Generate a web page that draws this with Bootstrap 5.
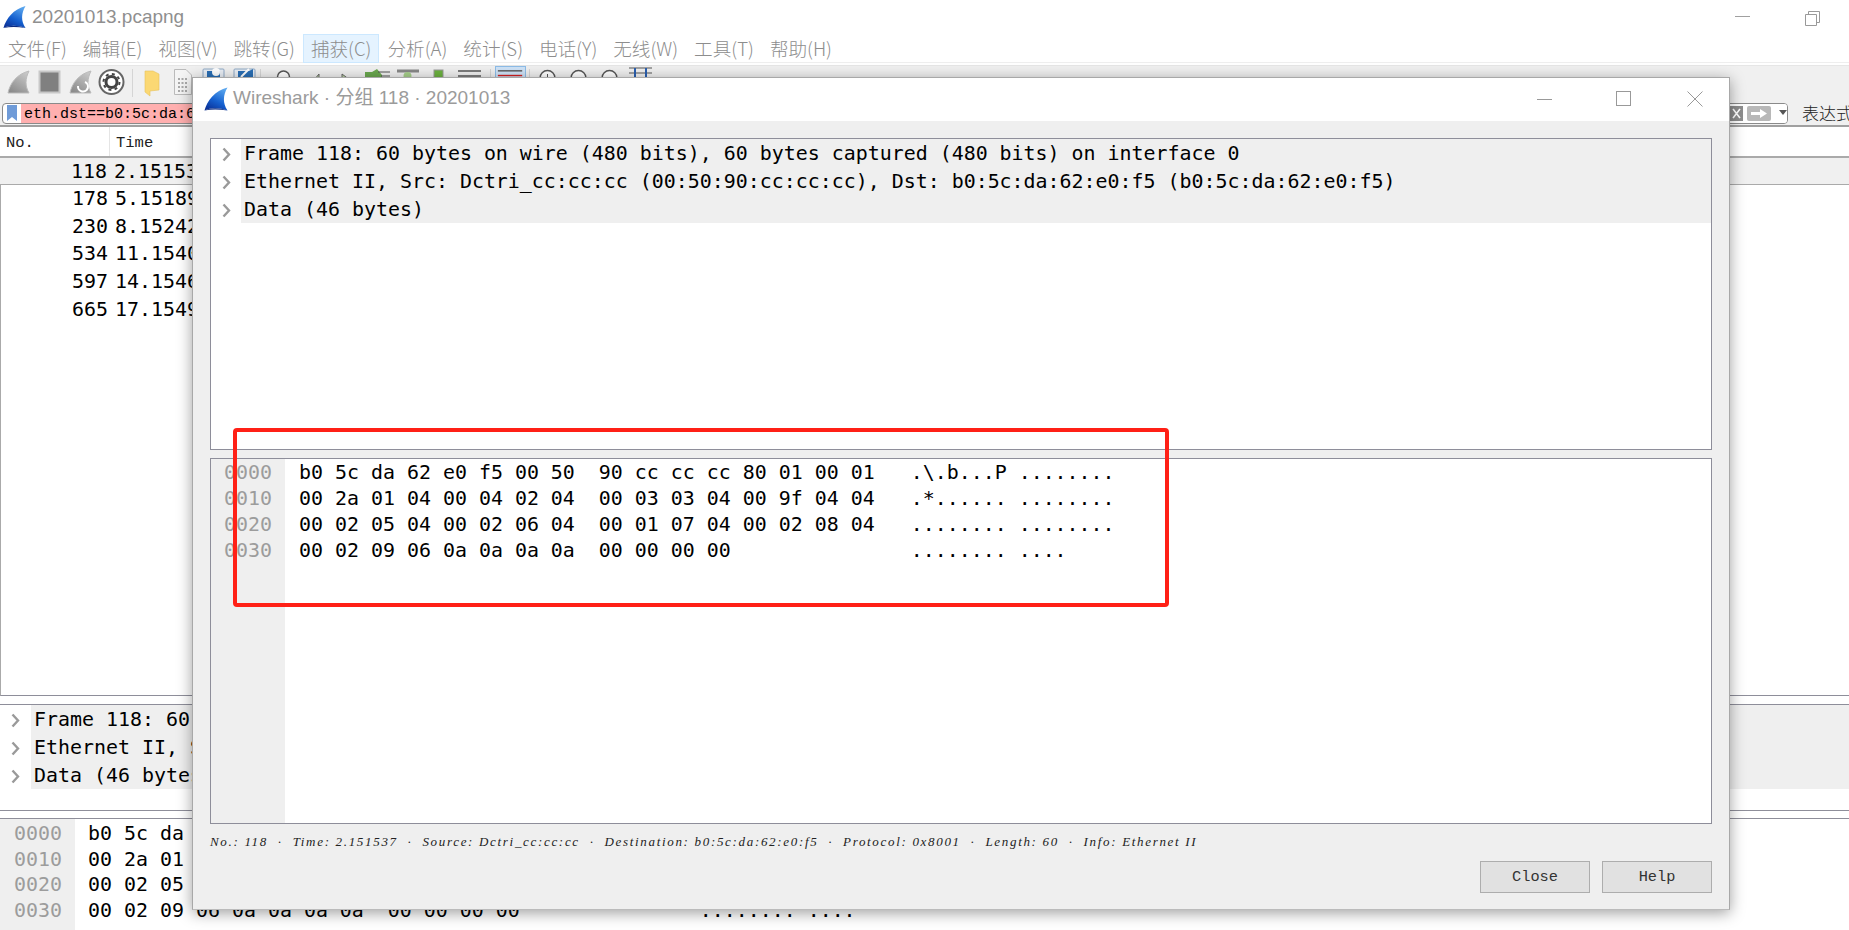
<!DOCTYPE html>
<html lang="zh">
<head>
<meta charset="utf-8">
<title>20201013.pcapng</title>
<link href="https://cdn.jsdelivr.net/npm/bootstrap@5.3.0/dist/css/bootstrap.min.css" rel="stylesheet">
<style>
html,body{margin:0;height:930px;overflow:hidden;background:#fff}
body{font-family:"Liberation Sans","Noto Sans CJK SC",sans-serif}
.desk{width:1849px;height:930px;overflow:hidden}
.mono{font-family:"DejaVu Sans Mono","Liberation Mono",monospace;font-size:19.93px;color:#000}
.win-title{height:34px;color:#8f8f8f;font-size:19px;padding-left:3px}
.win-title svg{margin-right:6px}
.cap-btn{position:absolute;top:10px}
.menu-strip{height:29px;padding-left:0}
.menu-it{height:29px;line-height:26px;padding:0 7px;font-size:18.6px;color:#8d8d8d;border:1px solid transparent;white-space:nowrap;font-family:"Noto Sans CJK SC",sans-serif;font-weight:300}
.menu-it.on{background:#e5f3ff;border-color:#cce8ff}
.tool-strip{height:36px;margin-top:2px;background:#f0f0f0;border-top:1px solid #e6e6e6;padding-left:3px}
.tool-it{width:31px;height:34px;flex:none}
.tool-it.on{background:#cfe3f7;border:1px solid #8dbde8}
.tool-sep{flex:none;border-left:1px solid #d5d5d5;height:28px;margin-top:3px}
.filter-strip{height:26px;background:#f0f0f0;border-bottom:2px solid #a0a0a0}
.filter-box{height:21px;margin-left:2px;width:1786px;flex:none;border:1px solid #8a8a8a;border-radius:4px;background:#fff;overflow:hidden}
.filter-mark{width:18px;flex:none}
.filter-txt{flex:1;background:#ffafaf;font-family:"Liberation Mono",monospace;font-size:15px;line-height:21px;padding-left:3px;color:#000}
.filter-end{width:58px;flex:none;background:#fff;padding-left:1px}
.expr{font-size:17px;font-family:"Noto Sans CJK SC",sans-serif;font-weight:300;margin-left:14px;color:#222;white-space:nowrap;flex:none}
.list-head{height:30px;border-bottom:1px solid #aaa;font-family:"Liberation Mono",monospace;font-size:15.5px;color:#222}
.head-no{width:110px;padding:2px 0 0 6px;border-right:1px solid #e5e5e5;line-height:29px}
.head-time{padding:2px 0 0 6px;line-height:29px}
.list-body{height:539px;border-bottom:1px solid #8e8e9a;border-left:1px solid #aaa}
.pkt{height:27.8px;line-height:27px}
.pkt.sel{background:#f0f0f0;border-top:1px solid #aaa;border-bottom:1px solid #aaa;margin-left:-1px}
.pkt-no{width:107px;text-align:right;flex:none}
.pkt-time{padding-left:7px}
.tree-pane{border-top:1px solid #8e8e9a;border-bottom:1px solid #8e8e9a;margin-top:8px;height:107px}
.tree-row{height:28px;line-height:29px}
.tree-arrow{width:31px;flex:none;text-align:center;background:#fff}
.tree-txt{flex:1;background:#efefef;padding-left:3px;white-space:pre}
.hex-pane{border-top:1px solid #8e8e9a;margin-top:7px;height:112px}
.gutter{width:75px;flex:none;background:#efefef;color:#9c9c9c;padding:2px 0 0 14px;line-height:25.6px;height:112px;white-space:pre}
.hex-lines{padding:2px 0 0 13px;line-height:25.6px;white-space:pre}
.dlg{left:192px;top:77px;width:1538px;height:833px;background:#efefef;border:1px solid #a8a8a8;border-bottom-color:#bbb;box-shadow:0 3px 14px rgba(0,0,0,.38)}
.dlg-title{height:43px;background:#fff;color:#9b9b9b;font-size:19px;padding:0 0 2px 11px;flex:none;font-family:"Liberation Sans","Noto Sans CJK SC",sans-serif}
.dlg-title svg{margin-right:5px}
.dlg-body{padding:17px 17px 16px 17px}
.dlg-tree{height:312px;background:#fff;border:1px solid #8e8e9a}
.dlg-tree .tree-arrow{width:30px}
.dlg-tree .tree-list{height:84px}
.dlg-hex{height:366px;margin-top:8px;background:#fff;border:1px solid #8e8e9a}
.dlg-hex .gutter{width:74px;height:100%;padding:1px 0 0 13px;line-height:26px}
.dlg-hex .hex-lines{padding:1px 0 0 14px;line-height:26px}
.dlg-status{height:37px;line-height:35px;font-family:"Liberation Serif",serif;font-style:italic;font-size:13px;color:#222;white-space:pre;letter-spacing:1.68px}
.dlg-btn{width:110px;height:32px;padding:0;background:#e1e1e1;border:1px solid #adadad;border-radius:0;font-family:"Liberation Mono",monospace;font-size:15.3px;color:#333;line-height:30px}
.red-frame{left:233px;top:428px;width:936px;height:179px;border:4.5px solid #ff2016;border-radius:4px}
</style>
</head>
<body>
<div class="desk position-relative">
  <svg width="0" height="0" class="position-absolute">
    <defs>
      <linearGradient id="fin" x1="0.7" y1="0" x2="0.2" y2="1"><stop offset="0" stop-color="#5aa6ee"/><stop offset=".55" stop-color="#1560cf"/><stop offset="1" stop-color="#0a2f95"/></linearGradient>
      <linearGradient id="grayfin" x1="0.8" y1="0" x2="0.2" y2="1"><stop offset="0" stop-color="#c9c9c9"/><stop offset="1" stop-color="#8a8a8a"/></linearGradient>
      <symbol id="shark" viewBox="0 0 24 24"><path d="M0.5 23.5C3 14 11 3.5 23.5 0.5C19 8 18.5 16 23.5 23.5C15 20.5 7 20.5 0.5 23.5Z" fill="url(#fin)"/><path d="M0.5 23.5C7 20.5 15 20.5 23.5 23.5C15 22 7 22 0.5 23.5Z" fill="#0a2a80"/></symbol>
    </defs>
  </svg>

  <!-- main window -->
  <div class="win-title d-flex align-items-center position-relative">
    <svg width="23" height="24"><use href="#shark"/></svg><span>20201013.pcapng</span>
    <svg class="cap-btn" style="left:1735px" width="16" height="14"><path d="M0 6.5H15" stroke="#a0a0a0" fill="none"/></svg>
    <svg class="cap-btn" style="left:1805px" width="16" height="16"><path d="M.5 4.5H11.5V15.5H.5ZM3.5 4V1.5H14.5V12.5H12" stroke="#999" fill="none"/></svg>
  </div>
  <div class="menu-strip d-flex border-bottom" style="border-color:#eee!important">
    <span class="menu-it">文件(F)</span><span class="menu-it">编辑(E)</span><span class="menu-it">视图(V)</span><span class="menu-it">跳转(G)</span><span class="menu-it on">捕获(C)</span><span class="menu-it">分析(A)</span><span class="menu-it">统计(S)</span><span class="menu-it">电话(Y)</span><span class="menu-it">无线(W)</span><span class="menu-it">工具(T)</span><span class="menu-it">帮助(H)</span>
  </div>
  <div class="tool-strip d-flex">
    <svg class="tool-it" viewBox="0 0 31 34"><path d="M5 27C7 17 14 8 26 5C22 13 22 20 26 27Z" fill="url(#grayfin)" stroke="#bbb"/></svg>
    <svg class="tool-it" viewBox="0 0 31 34"><rect x="5.5" y="5.5" width="20" height="21" fill="#808080" stroke="#c8c8c8" stroke-width="2"/></svg>
    <svg class="tool-it" viewBox="0 0 31 34"><path d="M5 27C7 17 14 8 26 5C22 13 22 20 26 27Z" fill="url(#grayfin)" stroke="#bbb"/><path d="M20 16A5 5 0 1 1 13 20" fill="none" stroke="#fff" stroke-width="2"/></svg>
    <svg class="tool-it" viewBox="0 0 31 34"><circle cx="15.5" cy="16" r="12" fill="#fff" stroke="#666" stroke-width="2"/><circle cx="15.5" cy="16" r="5.5" fill="none" stroke="#444" stroke-width="3"/><circle cx="15.5" cy="16" r="8" fill="none" stroke="#444" stroke-width="2" stroke-dasharray="3 3.3"/></svg>
    <div class="tool-sep" style="margin-left:5px;width:4px"></div>
    <svg class="tool-it" viewBox="0 0 31 34"><path d="M9 5H17L23 8V24L14 25V30L9 26Z" fill="#fbd873" stroke="#e8c35a" stroke-width=".6"/></svg>
    <svg class="tool-it" viewBox="0 0 31 34"><path d="M7.5 3.5H19L24.5 9V28.5H7.5Z" fill="#f5f5f5" stroke="#bbb"/><path d="M11 13H21M11 17H21M11 21H21M11 25H21" stroke="#aaa" stroke-width="2" stroke-dasharray="2 1.5"/></svg>
    <svg class="tool-it" viewBox="0 0 31 34"><rect x="5" y="3" width="21" height="24" rx="1" fill="#e9eef5" stroke="#8ea8c5"/><path d="M9 5H22V12H9Z" fill="#2a6fb5"/><circle cx="18" cy="6" r="4" fill="#fff"/></svg>
    <svg class="tool-it" viewBox="0 0 31 34"><rect x="5" y="3" width="21" height="24" rx="1" fill="#e9eef5" stroke="#8ea8c5"/><path d="M9 5H20L24 3V12H9Z" fill="#2a6fb5"/><path d="M12 11L20 3" stroke="#fff" stroke-width="2"/></svg>
    <div class="tool-sep" style="width:8px"></div>
    <svg class="tool-it" viewBox="0 0 31 34"><circle cx="15.5" cy="11" r="6" fill="#fff" stroke="#555" stroke-width="1.5"/></svg>
    <svg class="tool-it" viewBox="0 0 31 34"><path d="M5 14H15L20 8V14H27" fill="#bcd9a4" stroke="#666"/></svg>
    <svg class="tool-it" viewBox="0 0 31 34"><path d="M5 14H12V8L20 14H27" fill="#bcd9a4" stroke="#666"/></svg>
    <svg class="tool-it" viewBox="0 0 31 34"><path d="M4 6H11L16 3L21 9V18H4Z" fill="#6aa84f"/><path d="M17 6H29M20 10H29M20 14H29" stroke="#555"/></svg>
    <svg class="tool-it" viewBox="0 0 31 34"><path d="M5 5H27" stroke="#888" stroke-width="3"/><circle cx="15.5" cy="10" r="4" fill="#a6cf8a"/></svg>
    <svg class="tool-it" viewBox="0 0 31 34"><rect x="11" y="4" width="9" height="16" fill="#6cb33f" stroke="#999"/></svg>
    <svg class="tool-it" viewBox="0 0 31 34"><path d="M4 5H27M4 10H27" stroke="#555" stroke-width="1.5"/></svg>
    <div class="tool-sep" style="width:11px;margin-left:5px;margin-right:-6px"></div>
    <svg class="tool-it on" viewBox="0 0 31 34"><path d="M2 4H28" stroke="#555" stroke-width="1.5"/><path d="M2 9H28" stroke="#d42020" stroke-width="1.5"/></svg>
    <div class="tool-sep" style="width:6px;margin-left:3px;margin-right:-3px"></div>
    <svg class="tool-it" viewBox="0 0 31 34"><circle cx="15.5" cy="12" r="7.5" fill="#fff" stroke="#555" stroke-width="1.4"/><path d="M15.5 8V16" stroke="#555"/></svg>
    <svg class="tool-it" viewBox="0 0 31 34"><circle cx="15.5" cy="12" r="7.5" fill="#fff" stroke="#555" stroke-width="1.4"/></svg>
    <svg class="tool-it" viewBox="0 0 31 34"><circle cx="15.5" cy="12" r="7.5" fill="#fff" stroke="#555" stroke-width="1.4"/></svg>
    <svg class="tool-it" viewBox="0 0 31 34"><path d="M4 2H27M4 7H27" stroke="#555"/><path d="M10 2V12M21 2V12" stroke="#2a5fb0" stroke-width="2"/></svg>
  </div>
  <div class="filter-strip d-flex align-items-center">
    <div class="filter-box d-flex">
      <div class="filter-mark d-flex justify-content-center align-items-center"><svg width="10" height="16"><path d="M0 0H10V16L5 12L0 16Z" fill="#6f9bd8"/></svg></div>
      <div class="filter-txt">eth.dst==b0:5c:da:6</div>
      <div class="filter-end d-flex align-items-center gap-1">
        <svg width="13" height="15"><rect width="13" height="15" fill="#8d8d8d"/><path d="M3 3L10 12M10 3L3 12" stroke="#fff" stroke-width="1.6"/></svg>
        <svg width="24" height="15"><rect width="24" height="15" rx="2" fill="#b8b8b8"/><path d="M4 6H13V3L20 7.5L13 12V9H4Z" fill="#fff"/></svg>
        <svg class="ms-1" width="8" height="6"><path d="M0 0H8L4 5Z" fill="#555"/></svg>
      </div>
    </div>
    <span class="expr">表达式</span>
  </div>
  <div class="list-head d-flex"><div class="head-no">No.</div><div class="head-time">Time</div></div>
  <div class="list-body mono">
    <div class="pkt sel d-flex"><span class="pkt-no">118</span><span class="pkt-time">2.15153</span></div>
    <div class="pkt d-flex"><span class="pkt-no">178</span><span class="pkt-time">5.15189</span></div>
    <div class="pkt d-flex"><span class="pkt-no">230</span><span class="pkt-time">8.15242</span></div>
    <div class="pkt d-flex"><span class="pkt-no">534</span><span class="pkt-time">11.1540</span></div>
    <div class="pkt d-flex"><span class="pkt-no">597</span><span class="pkt-time">14.1546</span></div>
    <div class="pkt d-flex"><span class="pkt-no">665</span><span class="pkt-time">17.1549</span></div>
  </div>
  <div class="tree-pane mono">
    <div class="tree-row d-flex"><div class="tree-arrow"><svg width="9" height="15"><path d="M1.5 1.5L7 7.5L1.5 13.5" fill="none" stroke="#9a9a9a" stroke-width="2.4"/></svg></div><div class="tree-txt">Frame 118: 60</div></div>
    <div class="tree-row d-flex"><div class="tree-arrow"><svg width="9" height="15"><path d="M1.5 1.5L7 7.5L1.5 13.5" fill="none" stroke="#9a9a9a" stroke-width="2.4"/></svg></div><div class="tree-txt">Ethernet II, S</div></div>
    <div class="tree-row d-flex"><div class="tree-arrow"><svg width="9" height="15"><path d="M1.5 1.5L7 7.5L1.5 13.5" fill="none" stroke="#9a9a9a" stroke-width="2.4"/></svg></div><div class="tree-txt">Data (46 bytes</div></div>
  </div>
  <div class="hex-pane d-flex mono">
    <div class="gutter">0000
0010
0020
0030</div>
    <div class="hex-lines">b0 5c da
00 2a 01
00 02 05
00 02 09 06 0a 0a 0a 0a  00 00 00 00               ........ ....</div>
  </div>

  <!-- packet dialog -->
  <div class="dlg position-absolute d-flex flex-column">
    <div class="dlg-title d-flex align-items-center position-relative">
      <svg width="24" height="24"><use href="#shark"/></svg><span>Wireshark · 分组 118 · 20201013</span>
      <svg class="cap-btn" style="left:1344px;top:21px" width="16" height="3"><path d="M0 .5H15" stroke="#999" fill="none"/></svg>
      <svg class="cap-btn" style="left:1423px;top:13px" width="16" height="16"><rect x=".5" y=".5" width="14" height="14" fill="none" stroke="#999"/></svg>
      <svg class="cap-btn" style="left:1494px;top:13px" width="17" height="17"><path d="M.5 .5L15.5 15.5M15.5 .5L.5 15.5" stroke="#999" fill="none"/></svg>
    </div>
    <div class="dlg-body d-flex flex-column flex-grow-1">
      <div class="dlg-tree mono">
        <div class="tree-list">
          <div class="tree-row d-flex"><div class="tree-arrow"><svg width="9" height="15"><path d="M1.5 1.5L7 7.5L1.5 13.5" fill="none" stroke="#9a9a9a" stroke-width="2.4"/></svg></div><div class="tree-txt">Frame 118: 60 bytes on wire (480 bits), 60 bytes captured (480 bits) on interface 0</div></div>
          <div class="tree-row d-flex"><div class="tree-arrow"><svg width="9" height="15"><path d="M1.5 1.5L7 7.5L1.5 13.5" fill="none" stroke="#9a9a9a" stroke-width="2.4"/></svg></div><div class="tree-txt">Ethernet II, Src: Dctri_cc:cc:cc (00:50:90:cc:cc:cc), Dst: b0:5c:da:62:e0:f5 (b0:5c:da:62:e0:f5)</div></div>
          <div class="tree-row d-flex"><div class="tree-arrow"><svg width="9" height="15"><path d="M1.5 1.5L7 7.5L1.5 13.5" fill="none" stroke="#9a9a9a" stroke-width="2.4"/></svg></div><div class="tree-txt">Data (46 bytes)</div></div>
        </div>
      </div>
      <div class="dlg-hex d-flex mono">
        <div class="gutter">0000
0010
0020
0030</div>
        <div class="hex-lines">b0 5c da 62 e0 f5 00 50  90 cc cc cc 80 01 00 01   .\.b...P ........
00 2a 01 04 00 04 02 04  00 03 03 04 00 9f 04 04   .*...... ........
00 02 05 04 00 02 06 04  00 01 07 04 00 02 08 04   ........ ........
00 02 09 06 0a 0a 0a 0a  00 00 00 00               ........ ....</div>
      </div>
      <div class="dlg-status">No.: 118  ·  Time: 2.151537  ·  Source: Dctri_cc:cc:cc  ·  Destination: b0:5c:da:62:e0:f5  ·  Protocol: 0x8001  ·  Length: 60  ·  Info: Ethernet II</div>
      <div class="d-flex justify-content-end gap-2 mt-auto">
        <button type="button" class="btn dlg-btn me-1">Close</button>
        <button type="button" class="btn dlg-btn">Help</button>
      </div>
    </div>
  </div>
  <div class="red-frame position-absolute"></div>
</div>
<script src="https://cdn.jsdelivr.net/npm/bootstrap@5.3.0/dist/js/bootstrap.bundle.min.js"></script>
</body>
</html>
